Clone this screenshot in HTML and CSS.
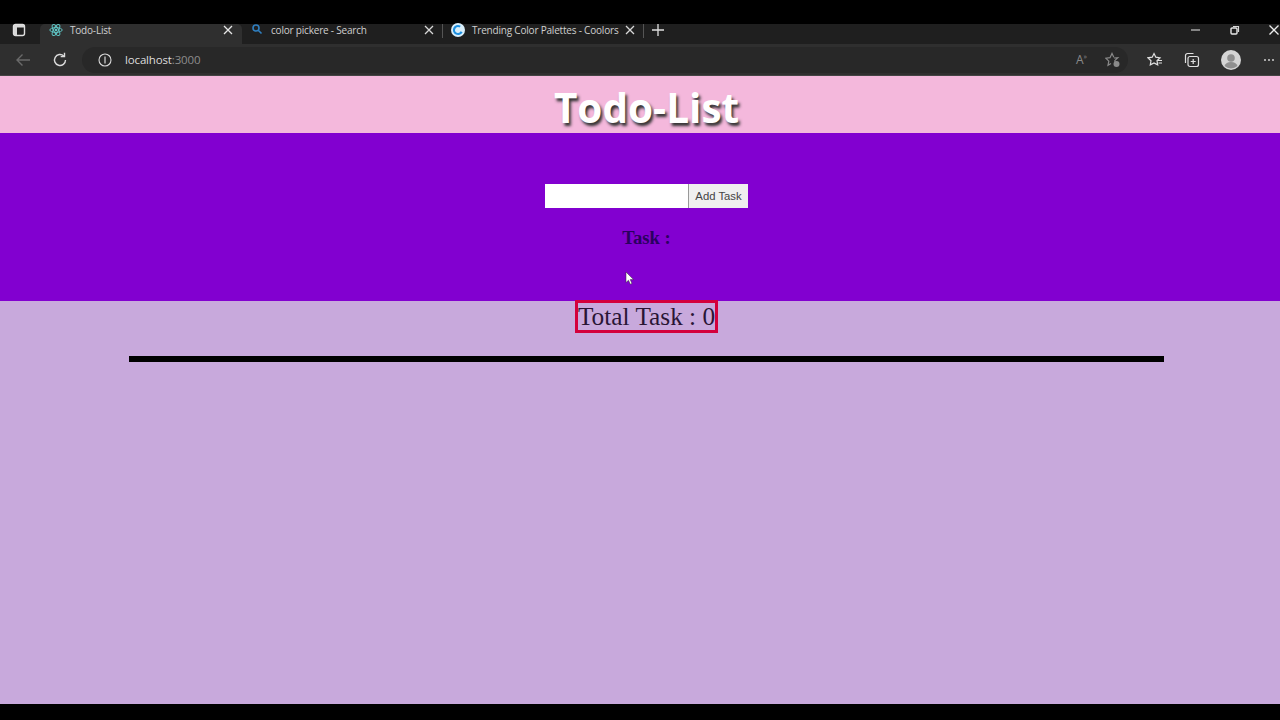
FILE: index.html
```html
<!DOCTYPE html>
<html lang="en">
<head>
    <meta charset="UTF-8">
    <title>Todo-List</title>
    <link rel="stylesheet" href="styles.css">
</head>
<body>
    <div class="tabbar">
        <svg class="tab-actions" width="14" height="14" viewBox="0 0 14 14"><rect x="1.5" y="1.5" width="11" height="11" rx="2" fill="none" stroke="#e0e0e0" stroke-width="1.4"/><path d="M2 2h10v2.5H5v8H2z" fill="#d8d8d8"/></svg>
        <div class="tab active">
            <svg class="favicon" width="14" height="14" viewBox="0 0 14 14"><g fill="none" stroke="#5fc4c4" stroke-width="1"><ellipse cx="7" cy="7" rx="6.2" ry="2.4"/><ellipse cx="7" cy="7" rx="6.2" ry="2.4" transform="rotate(60 7 7)"/><ellipse cx="7" cy="7" rx="6.2" ry="2.4" transform="rotate(120 7 7)"/></g><circle cx="7" cy="7" r="1.3" fill="#5fc4c4"/></svg>
            <span class="tab-title">Todo-List</span>
            <svg class="close" width="10" height="10" viewBox="0 0 10 10"><path d="M1 1l8 8M9 1l-8 8" stroke="#e6e6e6" stroke-width="1.3"/></svg>
        </div>
        <div class="tab second">
            <svg class="favicon" width="12" height="12" viewBox="0 0 12 12"><circle cx="5" cy="5" r="3" fill="none" stroke="#2f7fc0" stroke-width="1.6"/><path d="M7.2 7.2L10.5 10.5" stroke="#2f7fc0" stroke-width="1.6"/></svg>
            <span class="tab-title">color pickere - Search</span>
            <svg class="close" width="10" height="10" viewBox="0 0 10 10"><path d="M1 1l8 8M9 1l-8 8" stroke="#d8d8d8" stroke-width="1.3"/></svg>
        </div>
        <div class="tab third">
            <svg class="favicon" width="14" height="14" viewBox="0 0 14 14"><circle cx="7" cy="7" r="7" fill="#d8eefb"/><circle cx="7" cy="7" r="4" fill="none" stroke="#1d8fe0" stroke-width="2.2" stroke-dasharray="19 6" transform="rotate(25 7 7)"/></svg>
            <span class="tab-title">Trending Color Palettes - Coolors</span>
            <svg class="close" width="10" height="10" viewBox="0 0 10 10"><path d="M1 1l8 8M9 1l-8 8" stroke="#d8d8d8" stroke-width="1.3"/></svg>
        </div>
        <svg class="new-tab" width="12" height="12" viewBox="0 0 12 12"><path d="M6 0v12M0 6h12" stroke="#e0e0e0" stroke-width="1.3"/></svg>
        <div class="window-btns">
            <svg width="10" height="10" viewBox="0 0 10 10"><path d="M0 5h9" stroke="#c8c8c8" stroke-width="1.2"/></svg>
            <svg width="10" height="10" viewBox="0 0 10 10"><path d="M3 1.5h5.5V7" fill="none" stroke="#d8d8d8" stroke-width="1.2"/><rect x="1" y="3" width="6" height="6" rx="1" fill="none" stroke="#e8e8e8" stroke-width="1.4"/></svg>
            <svg width="10" height="10" viewBox="0 0 10 10"><path d="M.5.5l9 9M9.5.5l-9 9" stroke="#ececec" stroke-width="1.3"/></svg>
        </div>
    </div>

    <div class="toolbar">
        <svg class="back" width="16" height="14" viewBox="0 0 16 14"><path d="M15 7H2M7.5 1.5L2 7l5.5 5.500" fill="none" stroke="#6a6a6a" stroke-width="1.4"/></svg>
        <svg class="reload" width="16" height="16" viewBox="0 0 16 16"><path d="M13.500 8a5.500 5.500 0 1 1-1.700-4" fill="none" stroke="#dcdcdc" stroke-width="1.4"/><path d="M12.500 .8v3.800H8.700" fill="none" stroke="#dcdcdc" stroke-width="1.4"/></svg>
        <div class="address">
            <svg width="14" height="14" viewBox="0 0 14 14"><circle cx="7" cy="7" r="6" fill="none" stroke="#d8d8d8" stroke-width="1.1"/><path d="M7 3.500v7" stroke="#d8d8d8" stroke-width="1.2"/></svg>
            <span class="url">localhost<span class="port">:3000</span></span>
            <div class="address-icons">
                <span class="read-aloud">A<sup>»</sup></span>
                <svg width="16" height="16" viewBox="0 0 16 16"><path d="M9 6l3.800-.2-3 2.800.3 1.500M6 11.500l-3 1.800.8-4.200-3-2.900 4.200-.5L7 1.500 8.800 5.300" fill="none" stroke="#8a8a8a" stroke-width="1.2"/><circle cx="11.500" cy="12" r="3" fill="#8a8a8a"/></svg>
            </div>
        </div>
        <svg class="tool star" width="16" height="16" viewBox="0 0 16 16"><path d="M7 1.500l1.800 3.700 4.200.6-3 2.900.7 4.200L7 11l-3.700 1.900.7-4.200-3-2.900 4.200-.6z" fill="none" stroke="#e0e0e0" stroke-width="1.2"/><path d="M11 8.500h4M11.500 11h3.500" stroke="#e0e0e0" stroke-width="1.1"/></svg>
        <svg class="tool" width="16" height="16" viewBox="0 0 16 16"><rect x="4" y="4.500" width="10.500" height="10" rx="2" fill="none" stroke="#e0e0e0" stroke-width="1.2"/><path d="M1.500 11V3.500a2 2 0 0 1 2-2h6" fill="none" stroke="#e0e0e0" stroke-width="1.2"/><path d="M9.200 7v5M6.700 9.500h5" stroke="#e0e0e0" stroke-width="1.2"/></svg>
        <svg class="avatar" width="20" height="20" viewBox="0 0 20 20"><circle cx="10" cy="10" r="10" fill="#d4d4d4"/><circle cx="10" cy="8" r="3.800" fill="#8f8f8f"/><path d="M3.500 16a6.800 5.500 0 0 1 13 0 10 10 0 0 1-13 0z" fill="#8f8f8f"/></svg>
        <div class="more"><i></i><i></i><i></i></div>
    </div>

    <div class="viewport">
        <div class="app">
            <header class="app-header">
                <h1>Todo-List</h1>
            </header>
            <section class="task-panel">
                <form class="task-form">
                    <input type="text" class="task-input">
                    <button type="button" class="add-btn">Add Task</button>
                </form>
                <h3 class="task-heading">Task :</h3>
            </section>
            <section class="summary">
                <div class="total">Total Task : 0</div>
                <hr class="divider">
            </section>
            <svg class="cursor" width="9" height="14" viewBox="0 0 9 14"><path d="M1 1v10.500l2.500-2.300 1.800 4 1.700-.8-1.800-3.800H8.500z" fill="#fff" stroke="#333" stroke-width=".5"/></svg>
        </div>
    </div>
</body>
</html>
```
FILE: styles.css
```css
html, body {
    margin: 0;
    height: 720px;
    overflow: hidden;
    background-color: #000;
    font-family: "Open Sans", "Liberation Sans", sans-serif;
}

/* browser chrome */
.tabbar {
    margin-top: 24px;
    height: 20px;
    background-color: #1f1f1f;
    display: flex;
    align-items: flex-start;
}

.tab-actions {
    margin: -1px 14px 0 12px;
}

.tab {
    height: 100%;
    display: flex;
    align-items: flex-start;
    box-sizing: border-box;
    color: #cfcfcf;
    font-size: 10px;
    line-height: 12px;
    letter-spacing: -0.2px;
}

.tab svg {
    flex: none;
}

.tab.active {
    width: 202px;
    padding: 0 9px;
    background-color: #2f2f2f;
    border-radius: 5px 5px 0 0;
}

.tab.second {
    width: 201px;
    padding: 0 8px 0 9px;
    height: 14px;
    border-right: 1px solid #555;
}

.tab.third {
    width: 201px;
    padding: 0 8px;
    height: 14px;
    border-right: 1px solid #555;
}

.favicon {
    margin-top: -1px;
}

.close {
    margin-top: 1px;
}

.tab-title {
    flex: 1;
    margin-left: 7px;
    white-space: nowrap;
}

.tab.second .tab-title {
    margin-left: 8px;
}

.new-tab {
    margin-left: 8px;
}

.window-btns {
    margin: 1px 1px 0 auto;
    display: flex;
    gap: 29px;
}

.toolbar {
    height: 31px;
    background-color: #2f2f2f;
    border-bottom: 1px solid #444;
    display: flex;
    align-items: center;
}

.back {
    margin-left: 15px;
}

.reload {
    margin-left: 21px;
}

.address {
    margin-left: 14px;
    flex: 0 0 1046px;
    height: 26px;
    box-sizing: border-box;
    padding: 0 7px 0 16px;
    background-color: #282828;
    border-radius: 13px;
    display: flex;
    align-items: center;
    color: #dcdcdc;
    font-size: 11.500px;
}

.url {
    margin-left: 13px;
    letter-spacing: -0.15px;
}

.port {
    color: #8c8c8c;
}

.address-icons {
    margin-left: auto;
    display: flex;
    align-items: center;
    gap: 18px;
}

.read-aloud {
    color: #8a8a8a;
    font-size: 12px;
}

.read-aloud sup {
    font-size: 7px;
}

.tool {
    margin-left: 21px;
}

.tool.star {
    margin-left: 19px;
}

.avatar {
    margin-left: 21px;
}

.more {
    margin-left: 23px;
    display: flex;
    gap: 2px;
}

.more i {
    width: 2px;
    height: 2px;
    background-color: #d0d0d0;
    border-radius: 50%;
}

/* the page, slightly wider than the crop */
.viewport {
    width: 1280px;
    height: 628px;
    overflow: hidden;
}

.app {
    width: 1293px;
    height: 628px;
    display: flex;
    flex-direction: column;
    position: relative;
}

.app-header {
    height: 57px;
    background-color: #f4b8dc;
    text-align: center;
}

.app-header h1 {
    margin: 0;
    font-size: 40.500px;
    line-height: 63px;
    font-weight: 700;
    color: #fff;
    text-shadow: 2px 3px 3px #333;
}

.task-panel {
    height: 168px;
    background-color: #8200d0;
    box-sizing: border-box;
    padding-top: 51px;
    display: flex;
    flex-direction: column;
    align-items: center;
}

.task-form {
    display: flex;
    height: 24px;
}

.task-input {
    width: 143px;
    height: 24px;
    box-sizing: border-box;
    border: none;
    background-color: #fff;
    padding: 0;
    outline: none;
}

.add-btn {
    width: 60px;
    height: 24px;
    border: none;
    border-left: 1px solid #999;
    padding: 0;
    background-color: #efefef;
    color: #444;
    font-family: "Liberation Sans", Arial, sans-serif;
    font-size: 11.300px;
}

.task-heading {
    margin: 19px 0 0;
    font-family: "Liberation Serif", serif;
    font-size: 18.700px;
    font-weight: 700;
    color: #2b0060;
}

.summary {
    flex: 1;
    background-color: #c8a9dc;
    display: flex;
    flex-direction: column;
    align-items: center;
}

.total {
    border: 3px solid #d4003c;
    box-sizing: border-box;
    height: 33px;
    margin-top: -1px;
    font-family: "Liberation Serif", serif;
    font-size: 25.300px;
    line-height: 26px;
    color: #2a1535;
    white-space: nowrap;
}

.divider {
    width: 80%;
    height: 6px;
    margin: 23px 0 0;
    border: none;
    background-color: #000;
}

.cursor {
    position: absolute;
    left: 625px;
    top: 195px;
}
```
